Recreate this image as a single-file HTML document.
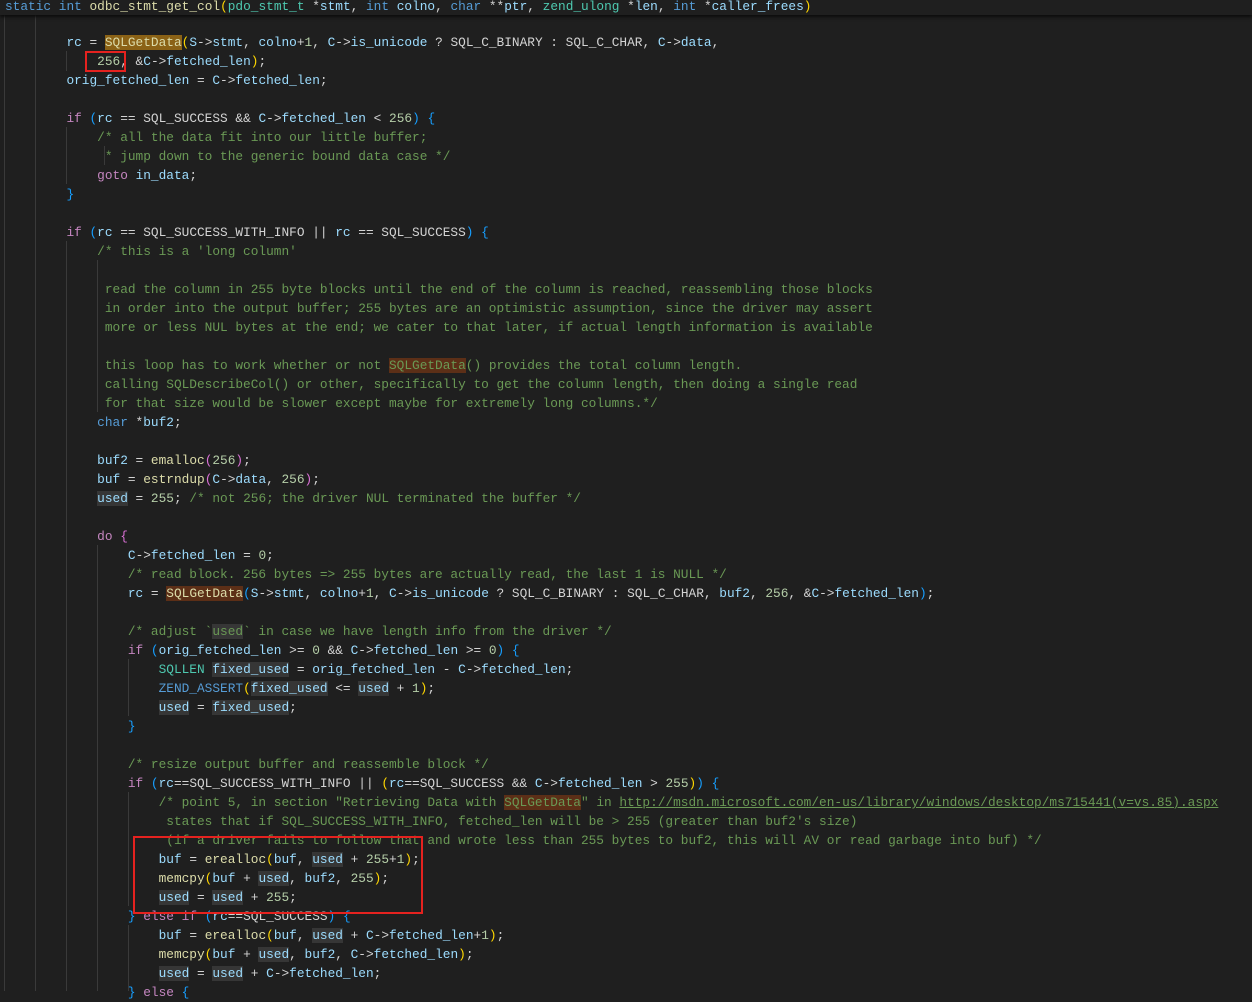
<!DOCTYPE html>
<html><head><meta charset="utf-8"><style>
html,body{margin:0;padding:0;background:#1f1f1f;width:1252px;height:991px;overflow:hidden}
.l{position:absolute;left:5px;height:19px;line-height:19px;white-space:pre;font-family:"Liberation Mono",monospace;font-size:12.8px;color:#d4d4d4}
.k{color:#569cd6}.c{color:#c586c0}.v{color:#9cdcfe}.f{color:#dcdcaa}.n{color:#b5cea8}.m{color:#6a9955}.t{color:#4ec9b0}
.p1{color:#ffd700}.p2{color:#da70d6}.p3{color:#179fff}
.h1{background:#8b6216}.h2{background:#5c2f17}.u{background:#363636}
.g{position:absolute;width:1px;background:#3a3a3a}
.hdr{position:absolute;left:0;top:0;width:1252px;height:15px;background:#1f1f1f;box-shadow:0 2px 3px #0c0c0c;z-index:2;overflow:hidden}
.box{position:absolute;border:2px solid #e5221f;z-index:3}
a{color:#6a9955;text-decoration:underline}
</style></head><body>
<div class="hdr"><div class="l" style="top:-3px"><span class="k">static</span> <span class="k">int</span> <span class="f">odbc_stmt_get_col</span><span class="p1">(</span><span class="t">pdo_stmt_t</span> *<span class="v">stmt</span>, <span class="k">int</span> <span class="v">colno</span>, <span class="k">char</span> **<span class="v">ptr</span>, <span class="t">zend_ulong</span> *<span class="v">len</span>, <span class="k">int</span> *<span class="v">caller_frees</span><span class="p1">)</span></div></div>
<div class="g" style="left:4px;top:15px;height:976px"></div>
<div class="g" style="left:35px;top:15px;height:976px"></div>
<div class="g" style="left:66px;top:51px;height:20px"></div>
<div class="g" style="left:66px;top:127px;height:57px"></div>
<div class="g" style="left:66px;top:241px;height:750px"></div>
<div class="g" style="left:97px;top:260px;height:152px"></div>
<div class="g" style="left:97px;top:545px;height:446px"></div>
<div class="g" style="left:128px;top:659px;height:57px"></div>
<div class="g" style="left:128px;top:792px;height:114px"></div>
<div class="g" style="left:128px;top:925px;height:66px"></div>
<div class="g" style="left:104px;top:146px;height:19px"></div>

<div class="l" style="top:33px">        <span class="v">rc</span> = <span class="f h1">SQLGetData</span><span class="p1">(</span><span class="v">S</span>-><span class="v">stmt</span>, <span class="v">colno</span>+<span class="n">1</span>, <span class="v">C</span>-><span class="v">is_unicode</span> ? SQL_C_BINARY : SQL_C_CHAR, <span class="v">C</span>-><span class="v">data</span>,</div>
<div class="l" style="top:52px">            <span class="n">256</span>, &amp;<span class="v">C</span>-><span class="v">fetched_len</span><span class="p1">)</span>;</div>
<div class="l" style="top:71px">        <span class="v">orig_fetched_len</span> = <span class="v">C</span>-><span class="v">fetched_len</span>;</div>
<div class="l" style="top:109px">        <span class="c">if</span> <span class="p3">(</span><span class="v">rc</span> == SQL_SUCCESS &amp;&amp; <span class="v">C</span>-><span class="v">fetched_len</span> &lt; <span class="n">256</span><span class="p3">)</span> <span class="p3">{</span></div>
<div class="l" style="top:128px">            <span class="m">/* all the data fit into our little buffer;</span></div>
<div class="l" style="top:147px">             <span class="m">* jump down to the generic bound data case */</span></div>
<div class="l" style="top:166px">            <span class="c">goto</span> <span class="v">in_data</span>;</div>
<div class="l" style="top:185px">        <span class="p3">}</span></div>
<div class="l" style="top:223px">        <span class="c">if</span> <span class="p3">(</span><span class="v">rc</span> == SQL_SUCCESS_WITH_INFO || <span class="v">rc</span> == SQL_SUCCESS<span class="p3">)</span> <span class="p3">{</span></div>
<div class="l m" style="top:242px">            /* this is a 'long column'</div>
<div class="l m" style="top:280px">             read the column in 255 byte blocks until the end of the column is reached, reassembling those blocks</div>
<div class="l m" style="top:299px">             in order into the output buffer; 255 bytes are an optimistic assumption, since the driver may assert</div>
<div class="l m" style="top:318px">             more or less NUL bytes at the end; we cater to that later, if actual length information is available</div>
<div class="l m" style="top:356px">             this loop has to work whether or not <span class="h2">SQLGetData</span>() provides the total column length.</div>
<div class="l m" style="top:375px">             calling SQLDescribeCol() or other, specifically to get the column length, then doing a single read</div>
<div class="l m" style="top:394px">             for that size would be slower except maybe for extremely long columns.*/</div>
<div class="l" style="top:413px">            <span class="k">char</span> *<span class="v">buf2</span>;</div>
<div class="l" style="top:451px">            <span class="v">buf2</span> = <span class="f">emalloc</span><span class="p2">(</span><span class="n">256</span><span class="p2">)</span>;</div>
<div class="l" style="top:470px">            <span class="v">buf</span> = <span class="f">estrndup</span><span class="p2">(</span><span class="v">C</span>-><span class="v">data</span>, <span class="n">256</span><span class="p2">)</span>;</div>
<div class="l" style="top:489px">            <span class="v u">used</span> = <span class="n">255</span>; <span class="m">/* not 256; the driver NUL terminated the buffer */</span></div>
<div class="l" style="top:527px">            <span class="c">do</span> <span class="p2">{</span></div>
<div class="l" style="top:546px">                <span class="v">C</span>-><span class="v">fetched_len</span> = <span class="n">0</span>;</div>
<div class="l m" style="top:565px">                /* read block. 256 bytes =&gt; 255 bytes are actually read, the last 1 is NULL */</div>
<div class="l" style="top:584px">                <span class="v">rc</span> = <span class="f h2">SQLGetData</span><span class="p3">(</span><span class="v">S</span>-><span class="v">stmt</span>, <span class="v">colno</span>+<span class="n">1</span>, <span class="v">C</span>-><span class="v">is_unicode</span> ? SQL_C_BINARY : SQL_C_CHAR, <span class="v">buf2</span>, <span class="n">256</span>, &amp;<span class="v">C</span>-><span class="v">fetched_len</span><span class="p3">)</span>;</div>
<div class="l m" style="top:622px">                /* adjust `<span class="u">used</span>` in case we have length info from the driver */</div>
<div class="l" style="top:641px">                <span class="c">if</span> <span class="p3">(</span><span class="v">orig_fetched_len</span> &gt;= <span class="n">0</span> &amp;&amp; <span class="v">C</span>-><span class="v">fetched_len</span> &gt;= <span class="n">0</span><span class="p3">)</span> <span class="p3">{</span></div>
<div class="l" style="top:660px">                    <span class="t">SQLLEN</span> <span class="v u">fixed_used</span> = <span class="v">orig_fetched_len</span> - <span class="v">C</span>-><span class="v">fetched_len</span>;</div>
<div class="l" style="top:679px">                    <span class="k">ZEND_ASSERT</span><span class="p1">(</span><span class="v u">fixed_used</span> &lt;= <span class="v u">used</span> + <span class="n">1</span><span class="p1">)</span>;</div>
<div class="l" style="top:698px">                    <span class="v u">used</span> = <span class="v u">fixed_used</span>;</div>
<div class="l" style="top:717px">                <span class="p3">}</span></div>
<div class="l m" style="top:755px">                /* resize output buffer and reassemble block */</div>
<div class="l" style="top:774px">                <span class="c">if</span> <span class="p3">(</span><span class="v">rc</span>==SQL_SUCCESS_WITH_INFO || <span class="p1">(</span><span class="v">rc</span>==SQL_SUCCESS &amp;&amp; <span class="v">C</span>-><span class="v">fetched_len</span> &gt; <span class="n">255</span><span class="p1">)</span><span class="p3">)</span> <span class="p3">{</span></div>
<div class="l m" style="top:793px">                    /* point 5, in section "Retrieving Data with <span class="h2">SQLGetData</span>" in <a>http://msdn.microsoft.com/en-us/library/windows/desktop/ms715441(v=vs.85).aspx</a></div>
<div class="l m" style="top:812px">                     states that if SQL_SUCCESS_WITH_INFO, fetched_len will be &gt; 255 (greater than buf2's size)</div>
<div class="l m" style="top:831px">                     (if a driver fails to follow that and wrote less than 255 bytes to buf2, this will AV or read garbage into buf) */</div>
<div class="l" style="top:850px">                    <span class="v">buf</span> = <span class="f">erealloc</span><span class="p1">(</span><span class="v">buf</span>, <span class="v u">used</span> + <span class="n">255</span>+<span class="n">1</span><span class="p1">)</span>;</div>
<div class="l" style="top:869px">                    <span class="f">memcpy</span><span class="p1">(</span><span class="v">buf</span> + <span class="v u">used</span>, <span class="v">buf2</span>, <span class="n">255</span><span class="p1">)</span>;</div>
<div class="l" style="top:888px">                    <span class="v u">used</span> = <span class="v u">used</span> + <span class="n">255</span>;</div>
<div class="l" style="top:907px">                <span class="p3">}</span> <span class="c">else</span> <span class="c">if</span> <span class="p3">(</span><span class="v">rc</span>==SQL_SUCCESS<span class="p3">)</span> <span class="p3">{</span></div>
<div class="l" style="top:926px">                    <span class="v">buf</span> = <span class="f">erealloc</span><span class="p1">(</span><span class="v">buf</span>, <span class="v u">used</span> + <span class="v">C</span>-><span class="v">fetched_len</span>+<span class="n">1</span><span class="p1">)</span>;</div>
<div class="l" style="top:945px">                    <span class="f">memcpy</span><span class="p1">(</span><span class="v">buf</span> + <span class="v u">used</span>, <span class="v">buf2</span>, <span class="v">C</span>-><span class="v">fetched_len</span><span class="p1">)</span>;</div>
<div class="l" style="top:964px">                    <span class="v u">used</span> = <span class="v u">used</span> + <span class="v">C</span>-><span class="v">fetched_len</span>;</div>
<div class="l" style="top:983px">                <span class="p3">}</span> <span class="c">else</span> <span class="p3">{</span></div>

<div class="box" style="left:85px;top:51px;width:37px;height:17px"></div>
<div class="box" style="left:133px;top:836px;width:286px;height:74px"></div>
</body></html>
